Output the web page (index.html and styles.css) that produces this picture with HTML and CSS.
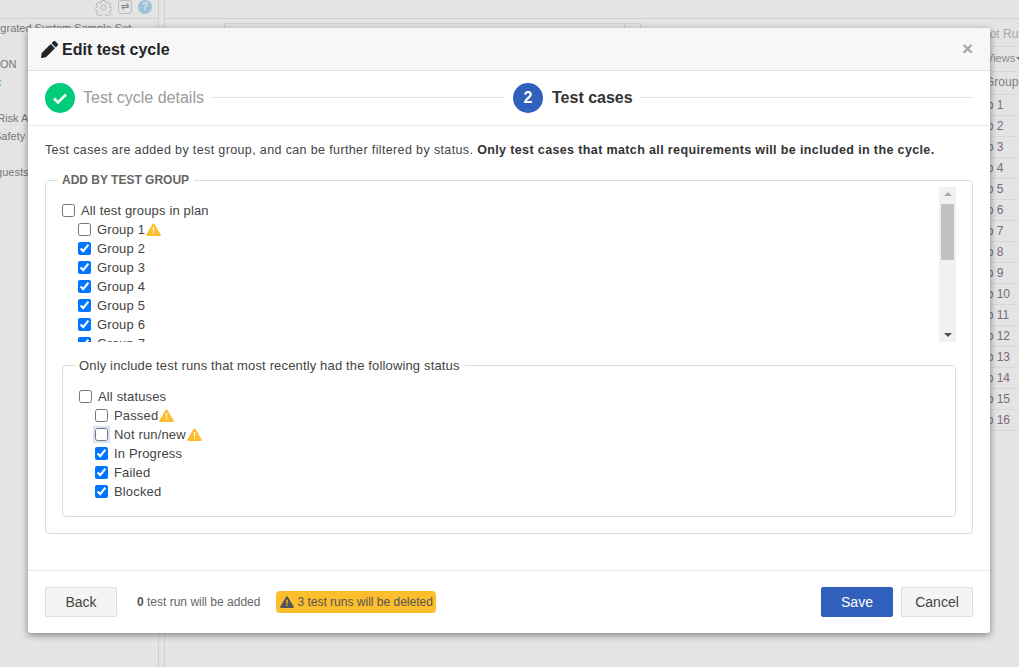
FILE: index.html
```html
<!DOCTYPE html>
<html lang="en">
<head>
<meta charset="utf-8">
<title>Edit test cycle</title>
<link rel="stylesheet" href="styles.css">
</head>
<body>
<div class="app">
  <div class="side">
    <div class="side-top">
      <svg class="gear" width="17" height="17" viewBox="0 0 24 24" fill="none" stroke="#b5b5b5" stroke-width="1.4"><circle cx="12" cy="12" r="3.6"/><path d="M10 2h4l.6 3 2.3 1 2.6-1.700 2.800 2.800-1.700 2.600 1 2.300 3 .6v3l-3 .6-1 2.300 1.700 2.600-2.800 2.800-2.600-1.700-2.300 1-.6 3h-4l-.6-3-2.300-1-2.600 1.700-2.800-2.800 1.700-2.600-1-2.300-3-.6v-3l3-.6 1-2.300-1.700-2.600 2.800-2.800 2.600 1.700 2.300-1z"/></svg>
      <span class="sync">⇄</span>
      <span class="help">?</span>
    </div>
    <ul class="tree">
      <li class="t1">Integrated System Sample Set</li>
      <li class="t2">ACTION</li>
      <li class="t3 link">ot</li>
      <li class="t4 gap">of Risk A</li>
      <li class="t5">Safety</li>
      <li class="t6 gap">Requests</li>
    </ul>
  </div>
  <div class="split"></div>
  <div class="main">
    <div class="main-top"></div>
    <div class="toolbar"><div class="search"><span class="search-btn"></span></div></div>
    <div class="table">
      <div class="cell head head1">Not Run</div>
      <div class="cell head head2">Views<span class="caret"></span></div>
      <div class="cell head head3">Group</div>
      <div class="cell">Group 1</div><div class="cell">Group 2</div><div class="cell">Group 3</div><div class="cell">Group 4</div>
      <div class="cell">Group 5</div><div class="cell">Group 6</div><div class="cell">Group 7</div><div class="cell">Group 8</div>
      <div class="cell">Group 9</div><div class="cell">Group 10</div><div class="cell">Group 11</div><div class="cell">Group 12</div>
      <div class="cell">Group 13</div><div class="cell">Group 14</div><div class="cell">Group 15</div><div class="cell">Group 16</div>
    </div>
  </div>
</div>

<div class="modal">
  <header class="m-head">
    <svg class="pencil" width="17" height="17" viewBox="0 0 512 512"><path fill="#212529" d="M497.900 142.100l-46.100 46.100c-4.700 4.700-12.300 4.700-17 0l-111-111c-4.700-4.700-4.700-12.300 0-17l46.100-46.100c18.700-18.700 49.100-18.700 67.900 0l60.100 60.100c18.800 18.700 18.800 49.100 0 67.900zM284.200 99.800L21.600 362.400.4 483.900c-2.900 16.400 11.400 30.600 27.800 27.800l121.500-21.300 262.600-262.600c4.700-4.700 4.700-12.300 0-17l-111-111c-4.800-4.700-12.400-4.700-17.100 0z"/></svg>
    <h1>Edit test cycle</h1>
    <span class="close">×</span>
  </header>

  <div class="steps">
    <div class="step done">
      <span class="dot green"><svg width="16" height="13" viewBox="0 0 16 13"><path d="M2 6.500l4 4 8-8" fill="none" stroke="#fff" stroke-width="2.600"/></svg></span>
      <span class="step-label">Test cycle details</span>
      <span class="step-line"></span>
    </div>
    <div class="step now">
      <span class="dot blue">2</span>
      <span class="step-label">Test cases</span>
      <span class="step-line"></span>
    </div>
  </div>

  <div class="m-body">
    <p class="intro">Test cases are added by test group, and can be further filtered by status. <b>Only test cases that match all requirements will be included in the cycle.</b></p>

    <fieldset class="outer">
      <legend>ADD BY TEST GROUP</legend>
      <div class="picker">
        <div class="list">
          <label class="row"><input type="checkbox"><span>All test groups in plan</span></label>
          <label class="row sub"><input type="checkbox"><span>Group 1</span><svg class="warn" width="15" height="13" viewBox="0 0 15 13"><path d="M7.500.5a1 1 0 0 1 .9.500l6.300 10.400a1 1 0 0 1-.9 1.500H1.200a1 1 0 0 1-.9-1.500L6.600 1a1 1 0 0 1 .9-.5z" fill="#fdbe2d"/><path d="M6.800 4h1.400l-.2 4.500H7zM6.800 9.400h1.400v1.400H6.800z" fill="#fff"/></svg></label>
          <label class="row sub"><input type="checkbox" checked><span>Group 2</span></label>
          <label class="row sub"><input type="checkbox" checked><span>Group 3</span></label>
          <label class="row sub"><input type="checkbox" checked><span>Group 4</span></label>
          <label class="row sub"><input type="checkbox" checked><span>Group 5</span></label>
          <label class="row sub"><input type="checkbox" checked><span>Group 6</span></label>
          <label class="row sub"><input type="checkbox" checked><span>Group 7</span></label>
        </div>
        <div class="scrollbar">
          <span class="arrow up"></span>
          <span class="thumb"></span>
          <span class="arrow down"></span>
        </div>
      </div>

      <fieldset class="inner">
        <legend>Only include test runs that most recently had the following status</legend>
        <label class="row"><input type="checkbox"><span>All statuses</span></label>
        <label class="row sub"><input type="checkbox"><span>Passed</span><svg class="warn" width="15" height="13" viewBox="0 0 15 13"><path d="M7.500.5a1 1 0 0 1 .9.500l6.300 10.400a1 1 0 0 1-.9 1.500H1.200a1 1 0 0 1-.9-1.500L6.600 1a1 1 0 0 1 .9-.5z" fill="#fdbe2d"/><path d="M6.800 4h1.400l-.2 4.500H7zM6.800 9.400h1.400v1.400H6.800z" fill="#fff"/></svg></label>
        <label class="row sub"><input class="focused" type="checkbox"><span>Not run/new</span><svg class="warn" width="15" height="13" viewBox="0 0 15 13"><path d="M7.500.5a1 1 0 0 1 .9.500l6.300 10.400a1 1 0 0 1-.9 1.500H1.200a1 1 0 0 1-.9-1.500L6.600 1a1 1 0 0 1 .9-.5z" fill="#fdbe2d"/><path d="M6.800 4h1.400l-.2 4.500H7zM6.800 9.400h1.400v1.400H6.800z" fill="#fff"/></svg></label>
        <label class="row sub"><input type="checkbox" checked><span>In Progress</span></label>
        <label class="row sub"><input type="checkbox" checked><span>Failed</span></label>
        <label class="row sub"><input type="checkbox" checked><span>Blocked</span></label>
      </fieldset>
    </fieldset>
  </div>

  <footer class="m-foot">
    <button class="btn" type="button">Back</button>
    <span class="added"><b>0</b> test run will be added</span>
    <span class="badge"><svg width="14" height="12" viewBox="0 0 15 13"><path d="M7.500.3a1 1 0 0 1 .9.500l6.400 10.600a1 1 0 0 1-.9 1.500H1.100a1 1 0 0 1-.9-1.500L6.600.8a1 1 0 0 1 .9-.5z" fill="#555"/><path d="M6.700 4h1.600l-.2 4.500H6.900zM6.700 9.400h1.600v1.500H6.700z" fill="#fdbe2d"/></svg>3 test runs will be deleted</span>
    <button class="btn primary" type="button">Save</button>
    <button class="btn" type="button">Cancel</button>
  </footer>
</div>
</body>
</html>
```

FILE: styles.css
```css
* { box-sizing: border-box; }
html, body { height: 100%; }
body {
  margin: 0;
  background: #e4e4e4;
  font-family: "Liberation Sans", Arial, sans-serif;
  font-size: 12px;
  color: #6b6b6b;
  overflow: hidden;
}

/* page behind the dialog */
.app { display: flex; height: 667px; }
.side { width: 159px; flex: none; border-right: 1px solid #d2d2d2; overflow: hidden; }
.side-top {
  height: 19px;
  border-bottom: 1px solid #d2d2d2;
  display: flex;
  justify-content: flex-end;
  align-items: center;
  gap: 6px;
  padding: 0 6px 4px 0;
}
.gear { flex: none; }
.sync {
  width: 14px; height: 14px;
  border: 1px solid #bdbdbd; border-radius: 3px;
  font-size: 10px; line-height: 12px; text-align: center; color: #888;
}
.help {
  width: 14px; height: 14px;
  border-radius: 50%;
  background: #9cc3d6; color: #d8e8ee;
  font-size: 10px; font-weight: bold; line-height: 14px; text-align: center;
}
.tree { list-style: none; margin: 0; padding: 0; white-space: nowrap; color: #777; font-size: 11px; }
.tree li { height: 18px; line-height: 18px; }
.tree .t1 { margin-left: -18px; margin-bottom: 18px; }
.tree .t2 { margin-left: -25px; }
.tree .t3 { margin-left: -8px; }
.tree .t4 { margin-left: -15px; }
.tree .t5 { margin-left: -6px; }
.tree .t6 { margin-left: -18px; }
.tree .gap { margin-top: 18px; }
.tree .link { color: #5b8db8; }
.split { width: 6px; flex: none; border-right: 1px solid #d2d2d2; }
.main { flex: 1; min-width: 0; display: flex; flex-direction: column; overflow: hidden; }
.main-top { height: 19px; flex: none; border-bottom: 1px solid #d2d2d2; }
.toolbar { height: 0; padding-left: 59px; }
.search { display: flex; justify-content: flex-end; width: 417px; height: 16px; margin-top: 4px; border: 1px solid #cfcfcf; }
.search-btn { width: 16px; border-left: 1px solid #cfcfcf; }
.table { margin-left: 785px; padding-top: 2px; white-space: nowrap; font-size: 12px; }
.cell { height: 21px; line-height: 20px; padding-left: 10px; border-bottom: 1px solid #d8d8d8; color: #7a6a7a; }
.head { padding-left: 31px; }
.head1 { height: 26px; line-height: 26px; color: #a8a8a8; }
.head2 { height: 25px; line-height: 23px; color: #8a8a8a; font-size: 11px; padding-left: 36px; }
.head3 { height: 23px; line-height: 21px; color: #808080; padding-left: 35px; }
.caret {
  display: inline-block; margin-left: 1px; vertical-align: 2px;
  border: 3px solid transparent; border-top-color: #666; border-bottom: 0;
}

/* dialog */
.modal {
  position: absolute;
  left: 28px; top: 28px;
  width: 962px; height: 605px;
  background: #fff;
  border-radius: 3px;
  box-shadow: 0 2px 7px rgba(0, 0, 0, .45);
  display: flex;
  flex-direction: column;
  color: #444;
  font-size: 13px;
}
.m-head {
  flex: none;
  height: 43px;
  display: flex;
  align-items: center;
  gap: 4px;
  padding: 1px 17px 0 13px;
  background: #f7f7f7;
  border-bottom: 1px solid #e0e0e0;
  border-radius: 3px 3px 0 0;
}
.m-head h1 { margin: 0; flex: 1; font-size: 16px; font-weight: bold; color: #212529; }
.close { font-size: 19px; font-weight: bold; line-height: 1; color: #a6a6a6; margin-top: -3px; }

.steps {
  flex: none;
  height: 55px;
  display: flex;
  padding: 0 17px;
  border-bottom: 1px solid #e8e8e8;
}
.step { flex: 1; display: flex; align-items: center; min-width: 0; }
.step.done { padding-right: 8px; }
.dot {
  width: 30px; height: 30px; flex: none;
  border-radius: 50%;
  display: flex; align-items: center; justify-content: center;
  color: #fff; font-size: 16px; font-weight: bold;
}
.green { background: #00cc7a; }
.blue { background: #3060bb; }
.step-label { margin-left: 8px; font-size: 16px; white-space: nowrap; }
.done .step-label { color: #999; }
.now .step-label { margin-left: 9px; font-weight: bold; color: #333; }
.step-line { flex: 1; height: 1px; margin: 0 0 2px 7px; background: #e4e4e4; }

.m-body { flex: 1; min-height: 0; padding: 17px 17px 0; }
.intro { margin: 0 0 15px; font-size: 12.500px; line-height: 15px; letter-spacing: .37px; white-space: nowrap; color: #444; }
.intro b { color: #333; }

fieldset { margin: 0; min-width: 0; border: 1px solid #dcdcdc; border-radius: 4px; }
legend { padding: 0 5px 0 4px; }
.outer { height: 361px; padding: 0 16px; }
.outer > legend { margin-left: -4px; font-size: 12px; font-weight: bold; color: #666; line-height: 14px; }
.picker { display: flex; height: 155px; }
.list { flex: 1; padding-top: 14px; overflow: hidden; }
.row { display: flex; align-items: center; height: 19px; white-space: nowrap; letter-spacing: .15px; }
.row input { flex: none; width: 13px; height: 13px; margin: 0 6px 0 0; }
.row.sub { padding-left: 16px; }
.focused { box-shadow: 0 0 0 2px #d5e3f5; border-radius: 2px; }
.warn { flex: none; margin-left: 1px; }
.scrollbar {
  flex: none;
  width: 17px;
  background: #f1f1f1;
  display: flex;
  flex-direction: column;
  align-items: center;
  padding: 5px 0;
}
.arrow { width: 0; height: 0; border: 4px solid transparent; }
.up { border-top: 0; border-bottom: 4px solid #a9a9a9; }
.down { margin-top: auto; border-bottom: 0; border-top: 4px solid #505050; }
.thumb { width: 13px; height: 56px; margin-top: 8px; background: #c1c1c1; }
.inner { height: 159px; margin-top: 16px; padding: 0 16px; }
.inner > legend { margin-left: -4px; padding: 0 5px 0 4px; font-size: 13px; line-height: 15px; color: #444; letter-spacing: .15px; }
.inner > .row:first-of-type { margin-top: 14px; }

.m-foot {
  flex: none;
  height: 63px;
  display: flex;
  align-items: center;
  padding: 0 17px;
  border-top: 1px solid #e8e8e8;
}
.btn {
  width: 72px; height: 30px;
  border: 1px solid #ddd;
  border-radius: 2px;
  background: #f4f4f4;
  color: #444;
  font: 14px "Liberation Sans", Arial, sans-serif;
}
.primary { margin-left: auto; margin-right: 8px; background: #3060bb; border-color: #3060bb; color: #fff; }
.added { margin-left: 20px; font-size: 12px; color: #666; }
.added b { color: #555; }
.badge {
  margin-left: 16px;
  height: 22px;
  padding: 0 3px 0 4px;
  display: flex;
  align-items: center;
  gap: 3px;
  background: #fdbe2d;
  border-radius: 4px;
  font-size: 12px;
  color: #555;
}
```
